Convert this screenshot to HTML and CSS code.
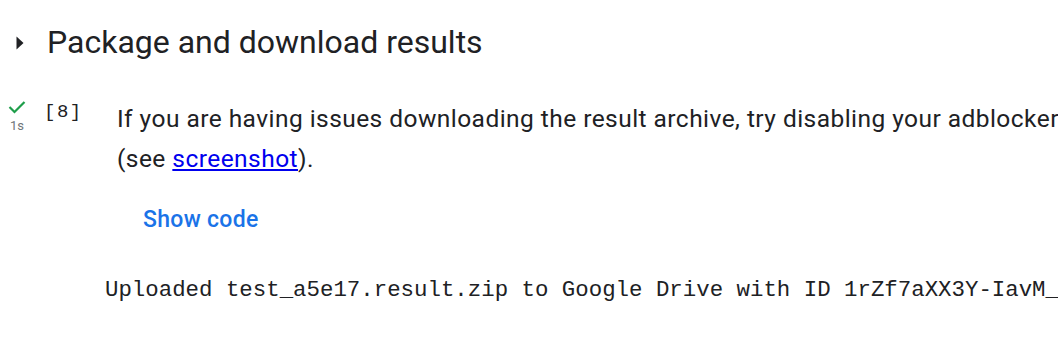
FILE: index.html
```html
<!DOCTYPE html>
<html>
<head>
<meta charset="utf-8">
<link rel="stylesheet" href="styles.css">
</head>
<body>
<div class="page">
  <div class="section">
    <svg class="caret" width="8" height="14" viewBox="0 0 8 14"><path d="M0.5 0.5 L7.5 7 L0.5 13.5 Z" fill="#202124"/></svg>
    <h1 class="section-title">Package and download results</h1>
  </div>
  <div class="cell">
    <div class="gutter">
      <div class="status">
        <svg class="check" width="18" height="14" viewBox="0 0 18 14"><path d="M1.5 7 L6.5 12 L16.5 2" fill="none" stroke="#1e9e4a" stroke-width="2.2"/></svg>
        <span class="time">1s</span>
      </div>
      <div class="count">[8]</div>
    </div>
    <div class="content">
      <p class="md">If you are having issues downloading the result archive, try disabling your adblocker<br>(see <a href="#" class="link">screenshot</a>).</p>
      <div class="show-code">Show code</div>
      <pre class="output">Uploaded test_a5e17.result.zip to Google Drive with ID 1rZf7aXX3Y-IavM_0dJxZbR</pre>
    </div>
  </div>
</div>
</body>
</html>
```
FILE: styles.css
```css
html, body {
  margin: 0;
  padding: 0;
  background: #ffffff;
  overflow: hidden;
}
.page {
  width: 1058px;
  height: 346px;
  overflow: hidden;
  font-family: Roboto, "Noto Sans", sans-serif;
  color: #202124;
}
.section {
  display: flex;
  align-items: center;
  padding: 22px 0 0 16px;
  height: 40px;
}
.caret {
  flex: none;
  margin-top: 1px;
}
.section-title {
  margin: 0 0 0 23px;
  font-weight: 400;
  font-size: 32px;
  white-space: nowrap;
  color: #202124;
}
.cell {
  display: flex;
  margin-top: 36px;
}
.gutter {
  flex: none;
  display: flex;
  width: 117px;
}
.status {
  display: flex;
  flex-direction: column;
  align-items: center;
  width: 18px;
  margin-left: 8px;
  padding-top: 2px;
}
.check {
  display: block;
}
.time {
  font-size: 13px;
  color: #70757a;
  line-height: 16px;
  margin-top: 4px;
}
.count {
  margin-left: 18px;
  font-family: "Liberation Mono", monospace;
  font-size: 19px;
  color: #202124;
  white-space: pre;
  letter-spacing: 1.5px;
  padding-top: 3px;
}
.content {
  flex: 1;
  min-width: 0;
}
.md {
  margin: 0;
  padding-top: 1px;
  font-size: 24.5px;
  letter-spacing: 0.45px;
  line-height: 40px;
  white-space: nowrap;
  color: #202124;
}
.link {
  color: #0000ee;
  text-decoration: underline;
}
.show-code {
  margin: 27px 0 0 26px;
  font-size: 23px;
  font-weight: 500;
  color: #1a73e8;
  letter-spacing: 0.3px;
}
.output {
  margin: 43px 0 0 -12px;
  font-family: "Liberation Mono", "Courier New", monospace;
  font-size: 22.4px;
  line-height: 28px;
  color: #202124;
  white-space: pre;
}
```
